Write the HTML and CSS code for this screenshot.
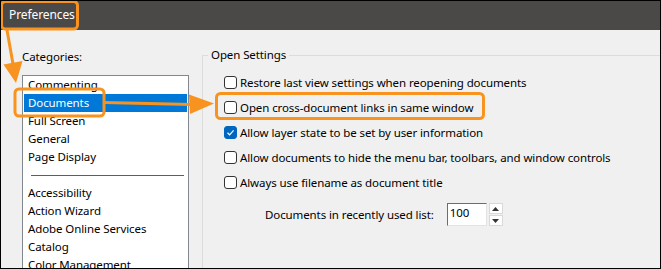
FILE: index.html
```html
<!DOCTYPE html>
<html>
<head>
    <title>Preferences</title>
    <meta charset="UTF-8">
    <link rel="stylesheet" href="styles.css">
</head>
<body>
    <div class="window">
        <div class="titlebar">Preferences</div>

        <div class="main">
            <div class="categories">
                <div class="categories-label">Categories:</div>
                <ul class="category-list">
                    <li>Commenting</li>
                    <li class="selected">Documents</li>
                    <li>Full Screen</li>
                    <li>General</li>
                    <li>Page Display</li>
                    <li class="separator"></li>
                    <li>Accessibility</li>
                    <li>Action Wizard</li>
                    <li>Adobe Online Services</li>
                    <li>Catalog</li>
                    <li>Color Management</li>
                </ul>
            </div>

            <fieldset class="group">
                <legend>Open Settings</legend>
                <label class="check-row"><span class="checkbox"></span>Restore last view settings when reopening documents</label>
                <label class="check-row"><span class="checkbox"></span>Open cross-document links in same window</label>
                <label class="check-row"><span class="checkbox checked">
                    <svg width="13" height="13" viewBox="0 0 13 13"><path d="M3.5 6.8 L5.6 8.8 L9.6 4.4" fill="none" stroke="#fff" stroke-width="1.2"/></svg>
                </span>Allow layer state to be set by user information</label>
                <label class="check-row"><span class="checkbox"></span>Allow documents to hide the menu bar, toolbars, and window controls</label>
                <label class="check-row"><span class="checkbox"></span>Always use filename as document title</label>

                <div class="spin-row">
                    <span class="spin-label">Documents in recently used list:</span>
                    <span class="spin-input">100</span>
                    <span class="spin-buttons">
                        <span class="spin-btn"><svg width="7" height="4" viewBox="0 0 7 4"><path d="M0 4 L3.5 0 L7 4 Z" fill="#333"/></svg></span>
                        <span class="spin-btn"><svg width="7" height="4" viewBox="0 0 7 4"><path d="M0 0 L3.5 4 L7 0 Z" fill="#333"/></svg></span>
                    </span>
                </div>
            </fieldset>
        </div>

        <!-- callouts drawn over the dialog -->
        <svg class="callouts" width="661" height="269" viewBox="0 0 661 269">
            <g fill="none" stroke="#f7931e" stroke-width="3">
                <rect x="1.5" y="1.5" width="76" height="27.5" rx="4"/>
                <rect x="15" y="89" width="89" height="27" rx="4"/>
                <rect x="216.5" y="93.5" width="267" height="25" rx="4"/>
                <line x1="7" y1="30" x2="13" y2="64"/>
                <line x1="104" y1="102.5" x2="192" y2="104.5"/>
            </g>
            <g fill="#f7931e">
                <polygon points="3.5,64.5 22.5,61 16,83"/>
                <polygon points="189,94.5 190,114 214,103.5"/>
            </g>
        </svg>
    </div>
</body>
</html>
```

FILE: styles.css
```css
body {
    margin: 0;
    padding: 0;
    font-family: "Noto Sans", "Open Sans", sans-serif;
    font-size: 11.5px;
    letter-spacing: -0.1px;
    color: #000;
}

.window {
    position: relative;
    width: 661px;
    height: 269px;
    box-sizing: border-box;
    border: 1px solid #000;
    background-color: #f0f0f0;
    overflow: hidden;
}

.titlebar {
    height: 29px;
    line-height: 28px;
    padding-left: 8px;
    background-color: #4b4947;
    color: #fff;
    font-size: 12px;
}

.main {
    display: flex;
    align-items: flex-start;
}

.categories {
    margin-left: 21px;
    width: 167px;
    flex-shrink: 0;
}

.categories-label {
    padding-top: 19px;
    line-height: 16px;
    margin-bottom: 10px;
}

.category-list {
    list-style: none;
    margin: 0;
    padding: 0;
    background-color: #fff;
    border: 1px solid #828790;
    height: 260px;
}

.category-list li {
    height: 18px;
    line-height: 18px;
    margin: 0 1px;
    padding-left: 4px;
    white-space: nowrap;
}

.category-list li.selected {
    background-color: #0078d7;
    color: #fff;
}

.category-list li.separator::after {
    content: "";
    display: block;
    margin: 0 3px;
    padding-top: 9px;
    border-bottom: 1px solid #0078d7;
    height: 0;
}

.group {
    margin: 17px 0 0 13px;
    padding: 7px 0 0 21px;
    border: 1px solid #dcdcdc;
    border-right: none;
    border-bottom: none;
    flex: 1;
    height: 260px;
    min-width: 0;
}

.group legend {
    margin-left: -16px;
    padding: 0 3px;
    line-height: 16px;
}

.check-row {
    display: flex;
    align-items: center;
    height: 25px;
    white-space: nowrap;
}

.checkbox {
    display: inline-flex;
    width: 13px;
    height: 13px;
    box-sizing: border-box;
    border: 1px solid #333;
    border-radius: 3px;
    background-color: #fff;
    margin-right: 3px;
    flex-shrink: 0;
}

.checkbox.checked {
    background-color: #0067c0;
    border-color: #0067c0;
}

.checkbox.checked svg {
    margin: -1px;
}

.spin-row {
    display: flex;
    align-items: center;
    margin-top: 8px;
    padding-left: 41px;
}

.spin-label {
    margin-right: 13px;
}

.spin-input {
    width: 40px;
    height: 23px;
    box-sizing: border-box;
    background-color: #fff;
    border: 1px solid #e3e3e3;
    border-top-color: #6d6d6d;
    border-left-color: #6d6d6d;
    padding-left: 2px;
    line-height: 18px;
}

.spin-buttons {
    display: flex;
    flex-direction: column;
    margin-left: 2px;
}

.spin-btn {
    display: flex;
    align-items: center;
    justify-content: center;
    width: 14px;
    height: 11px;
    box-sizing: border-box;
    background-color: #fff;
    border: 1px solid #d9d9d9;
}

.spin-btn + .spin-btn {
    margin-top: 1px;
}

.callouts {
    position: absolute;
    left: -1px;
    top: -1px;
    pointer-events: none;
}
```
